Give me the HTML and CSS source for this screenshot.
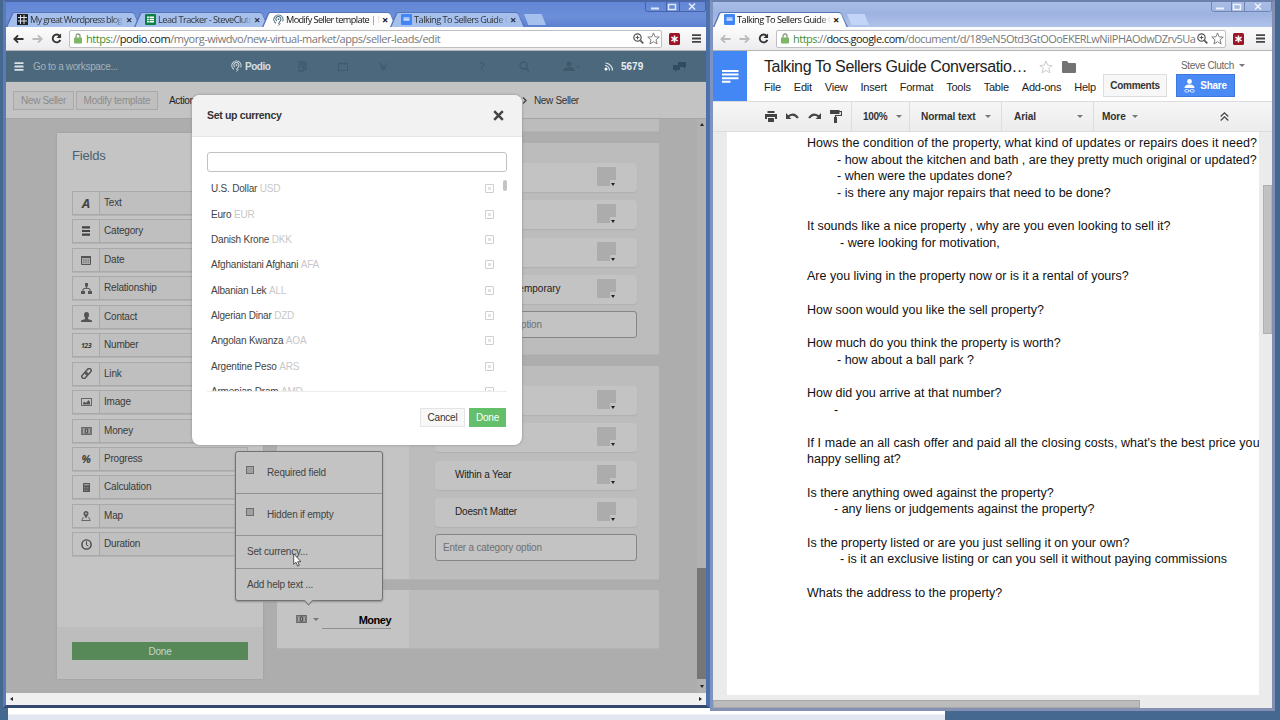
FILE: index.html
```html
<!DOCTYPE html>
<html lang="en">
<head>
    <meta charset="UTF-8">
    <meta name="viewport" content="width=device-width, initial-scale=1.0">
    <title>Modify Seller template</title>
    <link rel="stylesheet" href="styles.css">
</head>
<body>
    <!-- shared icons -->
    <svg class="defs" xmlns="http://www.w3.org/2000/svg">
        <symbol id="i-back" viewBox="0 0 12 10"><path d="M11.500 5H2M5.500 1L1.500 5l4 4" fill="none" stroke="currentColor" stroke-width="2"/></symbol>
        <symbol id="i-fwd" viewBox="0 0 12 10"><path d="M.5 5H10M6.500 1l4 4-4 4" fill="none" stroke="currentColor" stroke-width="2"/></symbol>
        <symbol id="i-reload" viewBox="0 0 12 12"><path d="M9.500 3.200A4.300 4.300 0 1 0 10.200 7.500" fill="none" stroke="currentColor" stroke-width="2"/><path d="M11 .5v5H6z" fill="currentColor"/></symbol>
        <symbol id="i-lock" viewBox="0 0 8 11"><path d="M2 5V3a2 2 0 0 1 4 0v2" fill="none" stroke="#8a9a80" stroke-width="1.300"/><rect y="4.500" width="8" height="6" rx=".8" fill="#7db765"/></symbol>
        <symbol id="i-zoom" viewBox="0 0 11 11"><circle cx="4.500" cy="4.500" r="3.700" fill="none" stroke="#555" stroke-width="1.200"/><path d="M7.300 7.300l3 3" stroke="#555" stroke-width="1.700"/><path d="M2.700 4.500h3.600M4.500 2.700v3.600" stroke="#555"/></symbol>
        <symbol id="i-star" viewBox="0 0 14 14"><path d="M7 1l1.700 4.200 4.500.3-3.500 2.900 1.200 4.500L7 10.400l-3.900 2.500 1.200-4.500L.8 5.500l4.500-.3z" fill="#fff" stroke="currentColor"/></symbol>
        <symbol id="i-menu" viewBox="0 0 9 9"><path d="M0 1.200h9M0 4.500h9M0 7.800h9" stroke="currentColor" stroke-width="1.800"/></symbol>
        <symbol id="i-ext" viewBox="0 0 11 12"><rect width="11" height="12" rx="1.500" fill="#9c1426"/><path d="M5.500 2.500v7M2.400 4.200l6.200 3.600M8.600 4.200L2.400 7.800" stroke="#fff" stroke-width="1.500"/></symbol>
        <symbol id="i-podio" viewBox="0 0 12 13"><path d="M3.300 10.200A5 5 0 1 1 10.500 8" fill="none" stroke="currentColor" stroke-width="1.100"/><path d="M4.200 7.800a2.800 2.800 0 1 1 3.800-.4L6 10.500" fill="none" stroke="currentColor" stroke-width="1.100"/><circle cx="6" cy="5.500" r="1" fill="currentColor"/><path d="M8 10l-2 2.500" stroke="currentColor"/></symbol>
        <symbol id="i-doc" viewBox="0 0 11 11"><rect width="11" height="11" rx="1" fill="#4285f4"/><path d="M2.500 4h6M2.500 5.900h6" stroke="#fff" stroke-width="1.200"/></symbol>
        <symbol id="i-money" viewBox="0 0 12 9"><rect width="12" height="9" fill="#666"/><rect x="1" y="1.500" width="10" height="6" fill="#999"/><ellipse cx="6" cy="4.500" rx="2" ry="3" fill="#555"/><path d="M2.500 3v3M9.500 3v3M6 3v3" stroke="#bbb" stroke-width=".9"/><path d="M1.600 2.500v4M10.400 2.500v4" stroke="#555" stroke-width=".8"/></symbol>
    </svg>

    <div class="back-window"></div>

    <!-- left browser -->
    <div class="window podio">
        <div class="titlebar">
            <div class="tabs">
                <div class="tab"><div class="tab-in"><svg width="11" height="11" viewBox="0 0 11 11"><rect width="11" height="11" fill="#222"/><path d="M3.500 1v9M7 1v9M1 3.500h9M1 7h9" stroke="#dde" stroke-width="1"/></svg><span class="tab-title">My great Wordpress blog</span><b>×</b></div></div>
                <div class="tab t2"><div class="tab-in"><svg width="11" height="11" viewBox="0 0 11 11"><rect width="11" height="11" rx="1" fill="#0b8043"/><path d="M2 2.500h7v6H2z" fill="#fff"/><path d="M2 4.500h7M2 6.500h7M4.200 2.500v6" stroke="#0b8043" stroke-width=".7"/></svg><span class="tab-title">Lead Tracker - SteveClutcl</span><b>×</b></div></div>
                <div class="tab t3 active"><div class="tab-in"><svg class="podio-ico" width="11" height="12"><use href="#i-podio"/></svg><span class="tab-title">Modify Seller template | N</span><b>×</b></div></div>
                <div class="tab t4"><div class="tab-in"><svg width="11" height="11"><use href="#i-doc"/></svg><span class="tab-title">Talking To Sellers Guide C</span><b>×</b></div></div>
                <div class="newtab"></div>
            </div>
            <div class="controls">
                <svg width="61" height="11" viewBox="0 0 61 11"><path d="M.5 0v8.500q0 2 2 2h56q2 0 2-2V0M21.500 0v10M34.500 0v10" fill="none" stroke="#4662a8"/><path d="M6 7.500h8" stroke="#dfe8fa" stroke-width="2"/><rect x="23.500" y="3.500" width="7" height="5" fill="none" stroke="#dfe8fa" stroke-width="1.500"/><path d="M44 2.500l6 6M50 2.500l-6 6" stroke="#dfe8fa" stroke-width="1.700"/></svg>
            </div>
        </div>
        <div class="toolbar">
            <svg class="nav" width="11" height="10"><use href="#i-back"/></svg>
            <svg class="nav off" width="11" height="10"><use href="#i-fwd"/></svg>
            <svg class="nav" width="11" height="11"><use href="#i-reload"/></svg>
            <div class="omnibox">
                <svg width="8" height="11"><use href="#i-lock"/></svg>
                <span class="url"><i>https</i>://<em>podio.com</em>/myorg-wiwdvo/new-virtual-market/apps/seller-leads/edit</span>
                <svg class="push" width="11" height="11"><use href="#i-zoom"/></svg>
                <svg class="star" width="13" height="13"><use href="#i-star"/></svg>
            </div>
            <svg class="ext" width="11" height="12"><use href="#i-ext"/></svg>
            <svg class="menu" width="9" height="9"><use href="#i-menu"/></svg>
        </div>

        <div class="podio-bar">
            <svg class="burger" width="10" height="9"><use href="#i-menu"/></svg>
            <span class="goto">Go to a workspace...</span>
            <span class="brand"><svg width="11" height="12"><use href="#i-podio"/></svg>Podio</span>
            <div class="dim left">
                <svg width="9" height="11" viewBox="0 0 9 11"><path d="M1 1h7v7H5v2H1zM3 3h3v3H3z" fill="none" stroke="#3c5668" stroke-width="1.300"/></svg>
                <svg width="10" height="9" viewBox="0 0 10 9"><rect x=".5" y="1.500" width="9" height="7" fill="none" stroke="#3c5668"/><path d="M3 0v3M7 0v3" stroke="#3c5668"/></svg>
                <svg width="9" height="9" viewBox="0 0 9 9"><path d="M1 4l3 4 4-7M1 1l6 7" fill="none" stroke="#3c5668" stroke-width="1.200"/></svg>
            </div>
            <div class="dim right">
                <span>?</span>
                <svg width="10" height="11" viewBox="0 0 10 11"><circle cx="4.500" cy="4.500" r="3.500" fill="none" stroke="#3c5668" stroke-width="1.400"/><path d="M7 7l3 3.500" stroke="#3c5668" stroke-width="1.800"/></svg>
                <svg width="18" height="10" viewBox="0 0 18 10"><circle cx="6" cy="3" r="2.500" fill="#3a5365"/><path d="M0 10q0-4 6-4t6 4z" fill="#3a5365"/><path d="M13 5h4l-2 2z" fill="#3a5365"/></svg>
            </div>
            <span class="feed"><svg width="10" height="10" viewBox="0 0 10 10"><circle cx="2" cy="8" r="1.500" fill="#fff"/><path d="M1 4.500a5 5 0 0 1 4.500 5M1.500 2a7.500 7.500 0 0 1 7 7.500" fill="none" stroke="#dfe6ea" stroke-width="1.200"/></svg>5679</span>
            <svg class="chat" width="13" height="11" viewBox="0 0 13 11"><path d="M5 1h8v5h-1v2l-2-2H5z" fill="#314c60"/><path d="M0 4h7v5H4l-2 2V9H0z" fill="#314c60"/></svg>
        </div>

        <div class="sub-bar">
            <span class="btn">New Seller</span>
            <span class="btn b2">Modify template</span>
            <span class="actions">Actions</span>
            <span class="crumb"><svg width="5" height="7" viewBox="0 0 5 7"><path d="M1 .5l3 3-3 3" fill="none" stroke="#444" stroke-width="1.400"/></svg>New Seller</span>
        </div>

        <div class="view">
            <div class="fields">
                <div class="fields-body">
                    <h2>Fields</h2>
                    <div class="field"><span class="ico letter">A</span><span class="name">Text</span></div>
                    <div class="field"><span class="ico"><svg width="8" height="10" viewBox="0 0 8 10"><path d="M0 1.300h8M0 5h8M0 8.700h8" stroke="#444" stroke-width="2.200"/></svg></span><span class="name">Category</span></div>
                    <div class="field"><span class="ico"><svg width="10" height="10" viewBox="0 0 10 10"><path d="M.5 1.500h9v8h-9z" fill="#aaa" stroke="#555"/><path d="M0 2h10" stroke="#555" stroke-width="2"/><path d="M2 5h6M2 7h6" stroke="#777" stroke-dasharray="1.500 .8"/></svg></span><span class="name">Date</span></div>
                    <div class="field"><span class="ico"><svg width="11" height="11" viewBox="0 0 11 11"><path d="M5.500 3v3M2 8V6l3.500-1L9 6v2" fill="none" stroke="#555"/><path d="M4 0h3v3.500H4zM0 8h4v3H0zM7 8h4v3H7z" fill="#555"/></svg></span><span class="name">Relationship</span></div>
                    <div class="field"><span class="ico"><svg width="11" height="10" viewBox="0 0 11 10"><ellipse cx="5.500" cy="3" rx="2.500" ry="3" fill="#555"/><path d="M4 5h3v2l4 1.500V10H0V8.500L4 7z" fill="#555"/></svg></span><span class="name">Contact</span></div>
                    <div class="field"><span class="ico digits">123</span><span class="name">Number</span></div>
                    <div class="field"><span class="ico"><svg width="11" height="11" viewBox="0 0 11 11"><g fill="none" stroke="#555" stroke-width="1.500" transform="rotate(-48 5.500 5.500)"><rect x="-.5" y="3.500" width="6.800" height="4" rx="2"/><rect x="4.700" y="3.500" width="6.800" height="4" rx="2"/></g></svg></span><span class="name">Link</span></div>
                    <div class="field"><span class="ico"><svg width="11" height="8" viewBox="0 0 11 8"><rect x=".5" y=".5" width="10" height="7" fill="#c4c4c4" stroke="#666"/><path d="M2 6.500V5l1.500-1.500L5 5l2.500-3L9 4v2.500z" fill="#555"/></svg></span><span class="name">Image</span></div>
                    <div class="field"><span class="ico"><svg width="11" height="8"><use href="#i-money"/></svg></span><span class="name">Money</span></div>
                    <div class="field"><span class="ico letter pct">%</span><span class="name">Progress</span></div>
                    <div class="field"><span class="ico"><svg width="7" height="9" viewBox="0 0 7 9"><rect width="7" height="9" rx=".6" fill="#555"/><path d="M1 1.800h5" stroke="#bbb"/><path d="M1 4.500h5M1 6h5M1 7.500h5" stroke="#999" stroke-width=".7" stroke-dasharray="1 .7"/></svg></span><span class="name">Calculation</span></div>
                    <div class="field"><span class="ico"><svg width="10" height="10" viewBox="0 0 10 10"><path d="M5 7.500L2.700 3.500a2.500 2.500 0 1 1 4.600 0z" fill="#555"/><circle cx="5" cy="2.500" r=".9" fill="#bbb"/><path d="M2.500 6L.7 9.500h8.600L7.500 6" fill="none" stroke="#666"/></svg></span><span class="name">Map</span></div>
                    <div class="field"><span class="ico"><svg width="11" height="11" viewBox="0 0 11 11"><circle cx="5.500" cy="5.500" r="4.600" fill="none" stroke="#444" stroke-width="1.400"/><path d="M5.500 2.500v3.300l1.800 1.400" fill="none" stroke="#444"/></svg></span><span class="name">Duration</span></div>
                </div>
                <div class="fields-foot"><span class="done">Done</span></div>
            </div>

            <div class="builder">
                <div class="row r0"><div class="cell-l"></div><div class="cell-r"></div></div>
                <div class="row r1">
                    <div class="cell-l"></div>
                    <div class="cell-r">
                        <div class="option"><span></span><div class="swatch"></div></div>
                        <div class="option"><span></span><div class="swatch"></div></div>
                        <div class="option"><span></span><div class="swatch"></div></div>
                        <div class="option"><span class="wide">Modern / Contemporary</span><div class="swatch"></div></div>
                        <div class="add">Enter a category option</div>
                    </div>
                </div>
                <div class="row r2">
                    <div class="cell-l"></div>
                    <div class="cell-r">
                        <div class="option"><span></span><div class="swatch"></div></div>
                        <div class="option"><span></span><div class="swatch"></div></div>
                        <div class="option"><span>Within a Year</span><div class="swatch"></div></div>
                        <div class="option"><span>Doesn't Matter</span><div class="swatch"></div></div>
                        <div class="add">Enter a category option</div>
                    </div>
                </div>
                <div class="row r3">
                    <div class="cell-l money"><svg width="11" height="8"><use href="#i-money"/></svg><i class="caret"></i><span class="label">Money</span></div>
                    <div class="cell-r"></div>
                </div>
            </div>

            <div class="vscroll"><i class="up"></i><div class="thumb"></div><i class="down"></i></div>

            <!-- field settings menu -->
            <div class="popover">
                <div class="pop-item tall"><i class="check"></i>Required field</div>
                <div class="pop-item tall"><i class="check"></i>Hidden if empty</div>
                <div class="pop-item">Set currency...</div>
                <div class="pop-item last">Add help text ...</div>
            </div>
            <svg class="cursor" width="9" height="14" viewBox="0 0 9 14"><path d="M.7.800v10.500l2.300-2 1.600 3.800 1.700-.8-1.600-3.600h3.200z" fill="#fff" stroke="#333" stroke-width=".8"/></svg>
        </div>
        <div class="hscroll"><i class="l"></i><i class="r"></i></div>

        <!-- currency dialog -->
        <div class="modal">
            <div class="modal-head"><span>Set up currency</span><svg width="11" height="11" viewBox="0 0 11 11"><path d="M1.200 1.200l8.600 8.600M9.800 1.200L1.200 9.800" stroke="#444" stroke-width="2.500"/></svg></div>
            <div class="search"></div>
            <div class="list-wrap">
                <div class="list">
                    <div class="cur">U.S. Dollar <small>USD</small><i class="box"></i></div>
                    <div class="cur">Euro <small>EUR</small><i class="box"></i></div>
                    <div class="cur">Danish Krone <small>DKK</small><i class="box"></i></div>
                    <div class="cur">Afghanistani Afghani <small>AFA</small><i class="box"></i></div>
                    <div class="cur">Albanian Lek <small>ALL</small><i class="box"></i></div>
                    <div class="cur">Algerian Dinar <small>DZD</small><i class="box"></i></div>
                    <div class="cur">Angolan Kwanza <small>AOA</small><i class="box"></i></div>
                    <div class="cur">Argentine Peso <small>ARS</small><i class="box"></i></div>
                    <div class="cur">Armenian Dram <small>AMD</small><i class="box"></i></div>
                </div>
                <div class="list-thumb"></div>
            </div>
            <div class="modal-foot"><span class="cancel">Cancel</span><span class="ok">Done</span></div>
        </div>
    </div>

    <!-- right browser -->
    <div class="window docs">
        <div class="titlebar">
            <div class="tabs">
                <div class="tab active"><div class="tab-in"><svg width="11" height="11"><use href="#i-doc"/></svg><span class="tab-title">Talking To Sellers Guide C</span><b>×</b></div></div>
                <div class="newtab"></div>
            </div>
            <div class="controls">
                <svg width="61" height="11" viewBox="0 0 61 11"><path d="M.5 0v8.500q0 2 2 2h56q2 0 2-2V0M20.500 0v10M33.500 0v10" fill="none" stroke="#7486b0"/><path d="M5 7.500h8" stroke="#eef2fc" stroke-width="2"/><rect x="22.500" y="3.500" width="7" height="5" fill="none" stroke="#eef2fc" stroke-width="1.500"/><path d="M44 2.500l6 6M50 2.500l-6 6" stroke="#eef2fc" stroke-width="1.700"/></svg>
            </div>
        </div>
        <div class="toolbar">
            <svg class="nav off" width="11" height="10"><use href="#i-back"/></svg>
            <svg class="nav off" width="11" height="10"><use href="#i-fwd"/></svg>
            <svg class="nav" width="11" height="11"><use href="#i-reload"/></svg>
            <div class="omnibox">
                <svg width="8" height="11"><use href="#i-lock"/></svg>
                <span class="url"><i>https</i>://<em>docs.google.com</em>/document/d/189eN5Otd3GtOOoEKERLwNiIPHAOdwDZrv5Ua</span>
                <svg class="push" width="11" height="11"><use href="#i-zoom"/></svg>
                <svg class="star" width="13" height="13"><use href="#i-star"/></svg>
            </div>
            <svg class="ext" width="11" height="12"><use href="#i-ext"/></svg>
            <svg class="menu" width="9" height="9"><use href="#i-menu"/></svg>
        </div>

        <div class="docs-head">
            <div class="docs-logo"><svg width="17" height="13" viewBox="0 0 17 13"><path d="M0 1h16.500M0 4.600h16.500M0 8.200h16.500M0 11.800h8.500" stroke="#fff" stroke-width="2"/></svg></div>
            <div class="docs-mid">
                <div class="docs-title"><span>Talking To Sellers Guide Conversatio…</span><svg class="tstar" width="14" height="14"><use href="#i-star"/></svg><svg width="14" height="12" viewBox="0 0 14 12"><path d="M0 1q0-1 1-1h4l1.500 2H13q1 0 1 1v8q0 1-1 1H1q-1 0-1-1z" fill="#737373"/></svg></div>
                <div class="docs-menu"><span>File</span><span>Edit</span><span>View</span><span>Insert</span><span>Format</span><span>Tools</span><span>Table</span><span>Add-ons</span><span>Help</span></div>
            </div>
            <div class="docs-right">
                <div class="user">Steve Clutch<i class="caret"></i></div>
                <div class="docs-btns">
                    <span class="comments">Comments</span>
                    <span class="share"><svg width="11" height="14" viewBox="0 0 11 14"><circle cx="5.500" cy="2.500" r="2.400" fill="#fff"/><path d="M.5 9q0-3.500 5-3.500t5 3.500z" fill="#fff"/><g fill="none" stroke="#dbe7fd"><rect x=".8" y="10.500" width="4" height="2.600" rx="1.300"/><rect x="6.200" y="10.500" width="4" height="2.600" rx="1.300"/></g><path d="M4 11.800h3" stroke="#dbe7fd"/></svg>Share</span>
                </div>
            </div>
        </div>

        <div class="docs-tools">
            <div class="group icons">
                <svg width="12" height="11" viewBox="0 0 12 11"><path d="M2.500 0h7v2h-7zM0 3h12v5h-2V6H2v2H0zM3 7h6v4H3z" fill="#444"/></svg>
                <svg width="13" height="8" viewBox="0 0 13 8"><path d="M0 1v6h5.500L3.300 5Q7.500 2 11 6.500l1.800-.8Q8.500-1 2.200 3.200z" fill="#444"/></svg>
                <svg width="13" height="8" viewBox="0 0 13 8"><path d="M13 1v6H7.500L9.700 5Q5.500 2 2 6.500L.2 5.700Q4.500-1 10.800 3.200z" fill="#444"/></svg>
                <svg width="12" height="13" viewBox="0 0 12 13"><path d="M0 0h9.500v4H0z" fill="#444"/><path d="M9 1.500h2.500v4H5.500V7" fill="none" stroke="#444" stroke-width="1.200"/><path d="M4 7h3v6H4z" fill="#444"/></svg>
            </div>
            <div class="group g1"><span>100%</span><i class="caret"></i></div>
            <div class="group g2"><span>Normal text</span><i class="caret"></i></div>
            <div class="group g3"><span>Arial</span><i class="caret"></i></div>
            <div class="group g4"><span>More</span><i class="caret"></i></div>
            <svg class="collapse" width="9" height="9" viewBox="0 0 9 9"><path d="M.7 4.500l3.800-3.600 3.800 3.600M.7 8.500l3.800-3.600 3.800 3.600" fill="none" stroke="#444" stroke-width="1.300"/></svg>
        </div>

        <div class="docs-view">
            <div class="page">
                <p class="long">Hows the condition of the property, what kind of updates or repairs does it need?</p>
                <p class="in">- how about the kitchen and bath , are they pretty much original or updated?</p>
                <p class="in">- when were the updates done?</p>
                <p class="in">- is there any major repairs that need to be done?</p>
                <p></p>
                <p>It sounds like a nice property , why are you even looking to sell it?</p>
                <p class="in more">- were looking for motivation,</p>
                <p></p>
                <p>Are you living in the property now or is it a rental of yours?</p>
                <p></p>
                <p>How soon would you like the sell property?</p>
                <p></p>
                <p>How much do you think the property is worth?</p>
                <p class="in">- how about a ball park ?</p>
                <p></p>
                <p>How did you arrive at that number?</p>
                <p class="in less">-</p>
                <p></p>
                <p class="long">If I made an all cash offer and paid all the closing costs, what's the best price you</p>
                <p>happy selling at?</p>
                <p></p>
                <p>Is there anything owed against the property?</p>
                <p class="in less">- any liens or judgements against the property?</p>
                <p></p>
                <p>Is the property listed or are you just selling it on your own?</p>
                <p class="in more">- is it an exclusive listing or can you sell it without paying commissions</p>
                <p></p>
                <p>Whats the address to the property?</p>
            </div>
            <div class="docs-vscroll"><div class="thumb"></div></div>
        </div>
        <div class="docs-hscroll"><div class="thumb"></div></div>
    </div>
</body>
</html>
```
FILE: styles.css
```css
*{
    margin: 0;
    padding: 0;
    box-sizing: border-box;
}
body {
    position: relative;
    width: 1280px;
    height: 720px;
    overflow: hidden;
    background: #44688f;
    font-family: "Liberation Sans", Arial, sans-serif;
    font-size: 10px;
    color: #333;
}
svg {
    display: block;
    flex: none;
}
.defs {
    position: absolute;
    width: 0;
    height: 0;
}
i, em {
    font-style: normal;
}

.back-window {
    position: absolute;
    left: 8px;
    top: 700px;
    width: 937px;
    height: 20px;
    background: linear-gradient(#fff 14px, #e2e6ef 15px);
}

/* windows */
.window {
    position: absolute;
    top: 0;
    display: flex;
    flex-direction: column;
    white-space: nowrap;
}
.podio {
    left: 3px;
    width: 707px;
    height: 708px;
    border: solid #3f62a3;
    border-width: 2px 4px 3px 3px;
    border-color: #4a66a4 #4b70aa #34496f #5b7bb5;
    letter-spacing: -0.2px;
}
.docs {
    left: 710px;
    width: 565px;
    height: 711px;
    border: solid #8592b4;
    border-width: 2px 3px 3px 3px;
    border-color: #6c81ae #8390b3 #8390b3 #7f93c0;
}
.titlebar {
    display: flex;
    justify-content: space-between;
    align-items: flex-start;
    flex: none;
    height: 25px;
    background: linear-gradient(#6286d6, #6d8fd9 60%, #5b7fcf);
}
.docs .titlebar {
    background: linear-gradient(#a9bde6, #9db3e0 50%, #b0c3ea);
}
.controls {
    margin-top: -1px;
}
.tabs {
    display: flex;
    padding-top: 10px;
}
.tab {
    width: 135px;
    height: 15px;
    background: #5473b8;
    clip-path: polygon(0 100%, 6px 1px, 8px 0, calc(100% - 9px) 0, calc(100% - 7px) 1px, 100% 100%);
    margin-right: -7px;
    padding: 1px 1px 0 1px;
}
.tab-in {
    display: flex;
    align-items: center;
    height: 15px;
    padding: 0 4px 2px 10px;
    background: #a6c0ee;
    clip-path: polygon(0 100%, 6px 1px, 7px 0, calc(100% - 8px) 0, calc(100% - 6px) 1px, 100% 100%);
    font: 9.200px "Open Sans", sans-serif;
    color: #333;
}
.active .tab-in {
    background: #fcfcfd;
    color: #111;
}
.tab-title {
    flex: 1;
    width: 0;
    margin: 0 2px 0 2px;
    letter-spacing: -0.68px;
    -webkit-mask-image: linear-gradient(90deg, #000 88%, transparent);
    mask-image: linear-gradient(90deg, #000 88%, transparent);
}
.t2 .tab-title, .t4 .tab-title, .docs .tab-title {
    letter-spacing: -0.52px;
}
.t3 .tab-title {
    letter-spacing: -0.6px;
}
.tab b {
    width: 10px;
    font-size: 11px;
    line-height: 12px;
}
.podio-ico {
    color: #44687a;
}
.newtab {
    width: 22px;
    height: 11px;
    margin: 2px 0 0 6px;
    background: #a6c0ee;
    clip-path: polygon(0 0, 80% 0, 100% 100%, 20% 100%);
}
.docs .newtab {
    background: #c2d5f8;
}

.toolbar {
    display: flex;
    align-items: center;
    flex: none;
    height: 24px;
    padding: 0 5px 0 7px;
    background: linear-gradient(#fcfcfd, #ececee);
    border-bottom: 1px solid #b5b5b8;
}
.docs .toolbar {
    padding-right: 7px;
}
.nav {
    margin-right: 8px;
    color: #333;
}
.nav.off {
    color: #bbb;
}
.omnibox {
    display: flex;
    align-items: center;
    flex: 1;
    height: 18px;
    padding: 0 1px 0 4px;
    margin-left: -1px;
    background: #fff;
    border: 1px solid #bfbfc2;
    border-radius: 2px;
    min-width: 0;
}
.url {
    margin-left: 4px;
    font: 11px "Open Sans", sans-serif;
    letter-spacing: -0.46px;
    color: #777;
}
.docs .url {
    letter-spacing: -0.52px;
}
.url i {
    color: #3f8f2f;
}
.url em {
    color: #222;
}
.push {
    margin-left: auto;
}
.star {
    margin-left: 3px;
    color: #777;
}
.ext {
    margin-left: 7px;
}
.menu {
    margin-left: 12px;
    color: #444;
}

/* podio */
.podio-bar {
    display: flex;
    align-items: center;
    flex: none;
    height: 31px;
    padding-left: 8px;
    background: #4c687c;
    color: #c3cdd4;
    border-bottom: 1px solid #5b7180;
}
.burger {
    color: #dbe2e6;
}
.goto {
    width: 198px;
    margin-left: 9px;
    letter-spacing: -0.35px;
    color: #a3b2bc;
}
.brand {
    display: flex;
    align-items: center;
    gap: 3px;
    width: 66px;
    letter-spacing: -0.5px;
    font-weight: bold;
    color: #d7dfe4;
}
.dim {
    display: flex;
    align-items: center;
    color: #3c5668;
    font-weight: bold;
}
.dim.left {
    gap: 31px;
    width: 182px;
    padding-left: 1px;
}
.dim.left, .dim.right {
    opacity: .7;
}
.dim.right {
    gap: 34px;
    width: 125px;
}
.feed {
    display: flex;
    gap: 7px;
    width: 69px;
    letter-spacing: 0;
    font-weight: bold;
    color: #e8edf0;
}
.sub-bar {
    display: flex;
    align-items: center;
    flex: none;
    height: 37px;
    padding-left: 7px;
    background: #c3c3c3;
    border-bottom: 1px solid #a5a5a5;
    letter-spacing: -0.35px;
}
.btn {
    width: 61px;
    height: 19px;
    line-height: 18px;
    text-align: center;
    background: #bfbfbf;
    border: 1px solid #a9a9a9;
    color: #8c8c8c;
}
.b2 {
    width: 82px;
    margin-left: 2px;
    letter-spacing: -0.25px;
}
.actions {
    width: 353px;
    margin-left: 11px;
    color: #222;
}
.crumb {
    display: flex;
    align-items: center;
    gap: 7px;
}

.view {
    position: relative;
    display: flex;
    flex: 1;
    min-height: 0;
    background: #adadad;
}
.fields {
    display: flex;
    flex-direction: column;
    width: 206px;
    height: 546px;
    margin: 14px 14px 0 51px;
    box-shadow: 0 0 2px #9a9a9a;
}
.fields-body {
    height: 494px;
    padding: 14px 15px 0;
    background: #c4c4c4;
}
.fields h2 {
    height: 44px;
    font-size: 13px;
    font-weight: normal;
    line-height: 18px;
    color: #4a6070;
}
.field {
    display: flex;
    height: 24px;
    margin-bottom: 4.450px;
    background: #bfbfbf;
    border: 1px solid #a9a9a9;
    box-shadow: 0 1px 0 #b3b3b3;
    color: #3a3a3a;
}
.ico {
    display: flex;
    align-items: center;
    justify-content: center;
    width: 27px;
    border-right: 1px solid #a9a9a9;
    background: #c3c3c3;
}
.letter {
    font: italic bold 13px "Open Sans", sans-serif;
    color: #444;
}
.pct {
    font-size: 11px;
}
.digits {
    font: italic bold 7px "Open Sans", sans-serif;
    letter-spacing: -0.5px;
}
.name {
    padding-left: 4px;
    line-height: 22px;
}
.fields-foot {
    flex: 1;
    padding: 15px 15px 0;
    background: #bdbdbd;
}
.done {
    display: block;
    height: 18px;
    line-height: 19px;
    text-align: center;
    background: #578858;
    color: #c9d6c9;
}

.builder {
    width: 382px;
}
.row {
    display: flex;
    margin-bottom: 12px;
    box-shadow: 0 1px 0 #b4b4b4;
}
.cell-l {
    width: 132px;
    background: #c4c4c4;
}
.cell-r {
    flex: 1;
    padding: 20px 22px 0 26px;
    background: #bcbcbc;
}
.r0 {
    height: 12px;
}
.r0 .cell-r {
    padding: 0;
}
.r1 {
    height: 211px;
}
.r2 {
    height: 213px;
    margin-bottom: 11px;
}
.r3 {
    height: 58px;
}
.option {
    display: flex;
    justify-content: space-between;
    height: 29px;
    margin-bottom: 8.300px;
    padding: 4px 21px 0 20px;
    background: #c3c3c3;
    border-radius: 4px;
    box-shadow: 0 1px 1px #b0b0b0;
    line-height: 19px;
    color: #222;
}
.wide {
    letter-spacing: 0;
}
.swatch {
    position: relative;
    width: 19px;
    height: 19px;
    background: #acacac;
}
.swatch::before {
    content: "";
    position: absolute;
    right: 0;
    bottom: 0;
    width: 6px;
    height: 6px;
    background: #c3c3c3;
}
.swatch::after {
    content: "";
    position: absolute;
    right: 1px;
    bottom: 0;
    border: 2px solid transparent;
    border-top: 3px solid #222;
    border-bottom: 0;
}
.add {
    height: 27px;
    margin-top: -1px;
    padding-left: 7px;
    line-height: 25px;
    background: #c3c3c3;
    border: 1px solid #858585;
    border-radius: 3px;
    color: #707070;
}
.caret {
    border: 3px solid transparent;
    border-top: 3px solid #777;
    border-bottom: 0;
}
.money {
    display: flex;
    align-items: flex-start;
    padding: 25px 18px 0 19px;
}
.money .caret {
    margin: 3px 3px 0 6px;
}
.label {
    flex: 1;
    height: 16px;
    margin-top: -2px;
    text-align: right;
    font-size: 11px;
    letter-spacing: -0.5px;
    line-height: 14px;
    font-weight: bold;
    color: #000;
    border-bottom: 1px solid #8f8f8f;
}
.vscroll {
    display: flex;
    flex-direction: column;
    align-items: center;
    width: 9px;
    margin-left: auto;
    background: #b1b1b1;
}
.vscroll .thumb {
    width: 9px;
    height: 111px;
    margin-top: 442px;
    background: #767676;
}
.up {
    margin-top: 4px;
    border: 2px solid transparent;
    border-top: 0;
    border-bottom: 3px solid #222;
}
.down {
    margin-top: 6px;
    border: 2px solid transparent;
    border-bottom: 0;
    border-top: 3px solid #222;
}
.hscroll {
    display: flex;
    justify-content: space-between;
    align-items: center;
    height: 12px;
    padding: 0 4px;
    background: #f0f0f0;
}
.hscroll .l {
    border: 2px solid transparent;
    border-left: 0;
    border-right: 3px solid #222;
}
.hscroll .r {
    border: 2px solid transparent;
    border-right: 0;
    border-left: 3px solid #222;
}

.popover {
    position: absolute;
    left: 229px;
    top: 332px;
    width: 148px;
    height: 150px;
    background: #c3c3c3;
    border: 1px solid #727272;
    border-radius: 3px;
    box-shadow: 0 1px 2px #8f8f8f;
}
.popover::after {
    content: "";
    position: absolute;
    left: 69px;
    bottom: -4px;
    width: 6px;
    height: 6px;
    background: #c3c3c3;
    border: solid #727272;
    border-width: 0 1px 1px 0;
    transform: rotate(45deg);
}
.pop-item {
    display: flex;
    align-items: center;
    height: 33px;
    padding: 0 0 1px 11px;
    border-bottom: 1px solid #929292;
    color: #444;
}
.pop-item.tall {
    height: 42px;
}
.pop-item.last {
    border: 0;
    height: 31px;
}
.check {
    width: 8px;
    height: 8px;
    margin: -4px 13px 0 -1px;
    background: #a0a0a0;
    border: 1px solid #6d6d6d;
}
.cursor {
    position: absolute;
    left: 287px;
    top: 434px;
}

/* dialog */
.modal {
    position: absolute;
    left: 186px;
    top: 93px;
    width: 330px;
    height: 350px;
    background: #fff;
    border-radius: 8px;
    box-shadow: 0 0 3px #8a8a8a;
    overflow: hidden;
}
.modal-head {
    display: flex;
    justify-content: space-between;
    align-items: center;
    height: 42px;
    padding: 0 18px 1px 15px;
    background: #f2f2f2;
    border-bottom: 1px solid #e6e6e6;
    font-weight: bold;
    font-size: 10.500px;
    letter-spacing: -0.33px;
}
.search {
    height: 20px;
    margin: 15px 15px 0;
    border: 1px solid #c2c2c2;
    border-radius: 3px;
}
.list-wrap {
    display: flex;
    justify-content: space-between;
    height: 220px;
    margin: 0 15px;
    overflow: hidden;
    border-bottom: 1px solid #ececec;
}
.list {
    width: 287px;
    padding: 4px 0 0 4px;
}
.cur {
    display: flex;
    align-items: center;
    height: 25.350px;
    white-space: pre;
    color: #444;
}
.cur small {
    font-size: 10px;
    color: #c8c8c8;
}
.box {
    width: 9px;
    height: 9px;
    margin-left: auto;
    padding: 2px;
    background: #e2e2e2 content-box;
    border: 1px solid #cfcfcf;
    border-radius: 1px;
}
.list-thumb {
    width: 4px;
    height: 11px;
    margin-top: 8px;
    border-radius: 2px;
    background: #c4c4c4;
}
.modal-foot {
    display: flex;
    justify-content: flex-end;
    gap: 4px;
    padding: 16px 16px 0;
}
.cancel, .ok {
    height: 19px;
    line-height: 19px;
    text-align: center;
}
.cancel {
    width: 45px;
    border: 1px solid #e4e4e4;
    background: #f8f8f8;
    line-height: 17px;
}
.ok {
    width: 37px;
    background: #64bf6a;
    color: #fff;
}

/* docs */
.docs-head {
    display: flex;
    flex: none;
    height: 50px;
    background: #fff;
}
.docs-logo {
    display: flex;
    align-items: center;
    justify-content: center;
    width: 34px;
    background: #4387f5;
}
.docs-mid {
    padding: 6px 0 0 17px;
    color: #222;
}
.docs-title {
    display: flex;
    align-items: center;
    height: 20px;
    font-size: 16px;
    letter-spacing: -0.38px;
}
.tstar {
    margin: 0 9px 0 12px;
    color: #ccc;
}
.docs-menu {
    display: flex;
    gap: 12.900px;
    margin-top: 4px;
    font-size: 11px;
    letter-spacing: -0.21px;
}
.docs-right {
    flex: 1;
    padding: 8px 37px 0 0;
}
.user {
    display: flex;
    align-items: center;
    justify-content: flex-end;
    gap: 5px;
    height: 12px;
    margin-right: -10px;
    letter-spacing: -0.3px;
    color: #666;
}
.user .caret {
    border-width: 3px;
    border-bottom: 0;
}
.docs-btns {
    display: flex;
    justify-content: flex-end;
    gap: 9px;
    margin-top: 3px;
    font: bold 10px "Liberation Sans", sans-serif;
    letter-spacing: -0.25px;
}
.comments, .share {
    display: flex;
    align-items: center;
    justify-content: center;
    height: 23px;
}
.comments {
    width: 64px;
    background: #f7f7f7;
    border: 1px solid #dcdcdc;
}
.share {
    gap: 5px;
    width: 59px;
    background: #4a8af4;
    border: 1px solid #3c78dd;
    color: #fff;
}
.docs-tools {
    display: flex;
    align-items: center;
    flex: none;
    height: 31px;
    background: linear-gradient(#f6f6f6, #ececec);
    border: solid #ddd;
    border-width: 1px 0;
    font-weight: bold;
    font-size: 10.100px;
    letter-spacing: -0.1px;
}
.group {
    display: flex;
    align-items: center;
    justify-content: space-between;
    height: 29px;
    padding-bottom: 1px;
    border-right: 1px solid #ddd;
}
.docs-tools .caret {
    border-width: 3px;
    border-bottom: 0;
}
.icons {
    width: 139px;
    padding: 0 9px 1px 52px;
}
.g1 {
    width: 58px;
    padding: 0 7px 0 11px;
    font-size: 10px;
    letter-spacing: -0.3px;
}
.g2 {
    width: 92px;
    padding: 0 10px 0 11px;
}
.g3 {
    width: 92px;
    padding: 0 10px 0 12px;
}
.g4 {
    width: 53px;
    padding: 0 9px 0 8px;
    border: 0;
}
.collapse {
    margin-left: 73px;
}
.docs-view {
    display: flex;
    flex: 1;
    min-height: 0;
    background: #ebebeb;
}
.page {
    width: 532px;
    height: 563px;
    margin-left: 14px;
    padding: 3px 0 0 80px;
    overflow: hidden;
    background: #fff;
    font-size: 12.500px;
    color: #111;
}
.page p {
    height: 16.670px;
    line-height: 16.670px;
}
.page .in {
    padding-left: 30px;
}
.page .more {
    padding-left: 33px;
}
.page .less {
    padding-left: 27px;
}
.page .long {
    letter-spacing: 0.06px;
}
.docs-vscroll {
    width: 9px;
    margin-left: auto;
    padding-top: 53px;
}
.docs-vscroll .thumb {
    height: 149px;
    background: #c1c1c1;
    border: 1px solid #b0b0b0;
}
.docs-hscroll {
    flex: none;
    height: 8px;
    background: #ebebeb;
}
.docs-hscroll .thumb {
    width: 427px;
    height: 8px;
    background: #bbb;
    border: 1px solid #a8a8a8;
}
```
